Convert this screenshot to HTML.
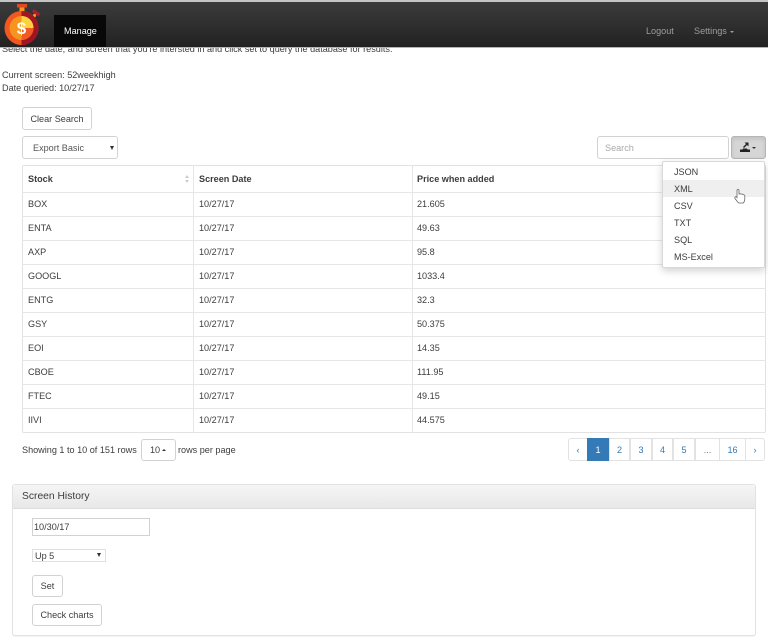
<!DOCTYPE html>
<html>
<head>
<meta charset="utf-8">
<style>
html,body{margin:0;padding:0;background:#fff;}
body{width:768px;height:644px;position:relative;overflow:hidden;font-family:"Liberation Sans",Arial,sans-serif;font-size:9.1px;color:#3c3c3c;}
#w{position:absolute;left:0;top:0;width:768px;height:644px;filter:blur(.35px);overflow:hidden;}
.a{position:absolute;white-space:nowrap;}
.t{line-height:14px;height:14px;}
.btn{position:absolute;box-sizing:border-box;border:1px solid #d2d2d2;border-radius:3px;background:#fff;text-align:center;color:#3c3c3c;}
.nav{position:absolute;left:0;top:0;width:768px;height:48px;box-sizing:border-box;border-top:2px solid #c4c4c4;border-bottom:1px solid #b5b5b5;background:linear-gradient(#3b3b3b,#222);}
.hl{position:absolute;left:22px;width:744px;height:1px;background:#e6e6e6;}
.vl{position:absolute;top:165px;width:1px;height:268px;background:#e6e6e6;}
.pg{position:absolute;top:438px;height:23px;box-sizing:border-box;border:1px solid #e2e2e2;margin-left:-1px;line-height:22px;text-align:center;color:#337ab7;background:#fff;}
</style>
</head>
<body>
<div id="w">
<div class="a t" style="left:2px;top:42px;">Select the date, and screen that you're intersted in and click set to query the database for results.</div>
<div class="nav"></div>
<div class="a" style="left:54px;top:15px;width:52px;height:32px;background:#080808;"></div>
<div class="a t" style="left:64px;top:24px;color:#fff;">Manage</div>
<div class="a t" style="left:646px;top:24px;color:#9d9d9d;">Logout</div>
<div class="a t" style="left:694px;top:24px;color:#9d9d9d;">Settings</div>
<div class="a" style="left:730px;top:31px;border-top:2.5px solid #9d9d9d;border-left:2.5px solid transparent;border-right:2.5px solid transparent;"></div>
<svg class="a" style="left:0;top:0;" width="44" height="48" viewBox="0 0 44 48">
<rect x="17" y="4" width="10" height="3.500" fill="#e2491f"/>
<rect x="19.500" y="7.500" width="5" height="4" fill="#f7941d"/>
<rect x="32" y="11" width="8" height="3.500" transform="rotate(35 36 13)" fill="#b01c30"/>
<circle cx="34.500" cy="15.500" r="1.600" fill="#f7941d"/>
<circle cx="21.500" cy="28" r="17" fill="#f0581f"/>
<path d="M21.500 11A17 17 0 0 1 21.500 45Z" fill="#a01424"/>
<circle cx="21.500" cy="28" r="12" fill="#f7941d"/>
<path d="M21.500 16A12 12 0 0 1 33.500 28H21.500Z" fill="#fdd23e"/>
<path d="M21.500 28H33.500A12 12 0 0 1 21.500 40Z" fill="#f15a24"/>
<text x="21.500" y="34" text-anchor="middle" font-family="Liberation Sans" font-weight="bold" font-size="17" fill="#fff">$</text>
</svg>
<div class="a t" style="left:2px;top:68px;">Current screen: 52weekhigh</div>
<div class="a t" style="left:2px;top:81px;">Date queried: 10/27/17</div>

<div class="btn" style="left:22px;top:107px;width:70px;height:23px;line-height:22px;">Clear Search</div>
<div class="btn" style="left:22px;top:136px;width:96px;height:23px;line-height:22px;text-align:left;padding-left:10px;color:#555;">Export Basic</div>
<div class="a" style="left:110px;top:146px;border-top:4px solid #333;border-left:2px solid transparent;border-right:2px solid transparent;"></div>

<div class="btn" style="left:597px;top:136px;width:132px;height:23px;line-height:22px;text-align:left;padding-left:7px;color:#aaa;">Search</div>
<div class="btn" style="left:731px;top:136px;width:35px;height:23px;background:#d6d6d6;border-color:#b5b5b5;box-shadow:inset 0 2px 4px rgba(0,0,0,.1);"></div>
<svg class="a" style="left:739px;top:141px;" width="13" height="12" viewBox="0 0 13 12"><path d="M1 11H11V8.500H8.500L8 7.500H4L3.500 8.500H1Z" fill="#222"/><path d="M4.500 6.500L8 3" stroke="#222" stroke-width="1.400" fill="none"/><path d="M5.500 1.500H9.500V5.500Z" fill="#222"/></svg>
<div class="a" style="left:752px;top:147px;border-top:2.5px solid #333;border-left:2.5px solid transparent;border-right:2.5px solid transparent;"></div>

<div class="a" style="left:22px;top:165px;width:744px;height:268px;box-sizing:border-box;border:1px solid #e2e2e2;border-radius:2px;"></div>
<div class="hl" style="top:192px;"></div><div class="hl" style="top:216px;"></div><div class="hl" style="top:240px;"></div><div class="hl" style="top:264px;"></div><div class="hl" style="top:288px;"></div><div class="hl" style="top:312px;"></div><div class="hl" style="top:336px;"></div><div class="hl" style="top:360px;"></div><div class="hl" style="top:384px;"></div><div class="hl" style="top:408px;"></div>
<div class="vl" style="left:193px;"></div><div class="vl" style="left:412px;"></div>
<div class="a t" style="left:28px;top:172px;font-weight:bold;">Stock</div>
<div class="a t" style="left:199px;top:172px;font-weight:bold;">Screen Date</div>
<div class="a t" style="left:417px;top:172px;font-weight:bold;">Price when added</div>
<div class="a" style="left:185px;top:175px;border-bottom:3.500px solid #ccc;border-left:2.500px solid transparent;border-right:2.500px solid transparent;"></div>
<div class="a" style="left:185px;top:180px;border-top:3.500px solid #ccc;border-left:2.500px solid transparent;border-right:2.500px solid transparent;"></div>

<div class="a t" style="left:28px;top:197px;">BOX</div><div class="a t" style="left:199px;top:197px;">10/27/17</div><div class="a t" style="left:417px;top:197px;">21.605</div>
<div class="a t" style="left:28px;top:221px;">ENTA</div><div class="a t" style="left:199px;top:221px;">10/27/17</div><div class="a t" style="left:417px;top:221px;">49.63</div>
<div class="a t" style="left:28px;top:245px;">AXP</div><div class="a t" style="left:199px;top:245px;">10/27/17</div><div class="a t" style="left:417px;top:245px;">95.8</div>
<div class="a t" style="left:28px;top:269px;">GOOGL</div><div class="a t" style="left:199px;top:269px;">10/27/17</div><div class="a t" style="left:417px;top:269px;">1033.4</div>
<div class="a t" style="left:28px;top:293px;">ENTG</div><div class="a t" style="left:199px;top:293px;">10/27/17</div><div class="a t" style="left:417px;top:293px;">32.3</div>
<div class="a t" style="left:28px;top:317px;">GSY</div><div class="a t" style="left:199px;top:317px;">10/27/17</div><div class="a t" style="left:417px;top:317px;">50.375</div>
<div class="a t" style="left:28px;top:341px;">EOI</div><div class="a t" style="left:199px;top:341px;">10/27/17</div><div class="a t" style="left:417px;top:341px;">14.35</div>
<div class="a t" style="left:28px;top:365px;">CBOE</div><div class="a t" style="left:199px;top:365px;">10/27/17</div><div class="a t" style="left:417px;top:365px;">111.95</div>
<div class="a t" style="left:28px;top:389px;">FTEC</div><div class="a t" style="left:199px;top:389px;">10/27/17</div><div class="a t" style="left:417px;top:389px;">49.15</div>
<div class="a t" style="left:28px;top:413px;">IIVI</div><div class="a t" style="left:199px;top:413px;">10/27/17</div><div class="a t" style="left:417px;top:413px;">44.575</div>

<div class="a" style="left:662px;top:161px;width:103px;height:107px;box-sizing:border-box;background:#fff;border:1px solid #d8d8d8;border-radius:2px;box-shadow:0 3px 8px rgba(0,0,0,.18);"></div>
<div class="a" style="left:663px;top:180px;width:101px;height:17px;background:#efefef;"></div>
<div class="a t" style="left:674px;top:165px;">JSON</div>
<div class="a t" style="left:674px;top:182px;">XML</div>
<div class="a t" style="left:674px;top:199px;">CSV</div>
<div class="a t" style="left:674px;top:216px;">TXT</div>
<div class="a t" style="left:674px;top:233px;">SQL</div>
<div class="a t" style="left:674px;top:250px;">MS-Excel</div>
<svg class="a" style="left:733px;top:188px;" width="13" height="16" viewBox="0 0 13 16"><path d="M4 8V2.500C4 1 6 1 6 2.500V6.500C6 5.500 8 5.500 8 6.500C8 5.800 10 5.800 10 7C10 6.500 11.800 6.500 11.800 8V11C11.800 13 11 14 10.500 15H5.500L2 10.500C1.200 9 3 8 4 9.500Z" fill="#fff" stroke="#666" stroke-width=".8"/></svg>

<div class="a t" style="left:22px;top:443px;">Showing 1 to 10 of 151 rows</div>
<div class="btn" style="left:141px;top:439px;width:35px;height:22px;line-height:21px;text-align:left;padding-left:8px;">10</div>
<div class="a" style="left:162px;top:449px;border-bottom:2.500px solid #333;border-left:2.500px solid transparent;border-right:2.500px solid transparent;"></div>
<div class="a t" style="left:178px;top:443px;">rows per page</div>

<div class="pg" style="left:569px;width:20px;border-radius:3px 0 0 3px;">‹</div>
<div class="pg" style="left:588px;width:22px;background:#337ab7;border-color:#337ab7;color:#fff;">1</div>
<div class="pg" style="left:610px;width:21px;">2</div>
<div class="pg" style="left:631px;width:22px;">3</div>
<div class="pg" style="left:653px;width:21px;">4</div>
<div class="pg" style="left:674px;width:22px;">5</div>
<div class="pg" style="left:696px;width:25px;color:#777;">...</div>
<div class="pg" style="left:720px;width:27px;">16</div>
<div class="pg" style="left:746px;width:20px;border-radius:0 3px 3px 0;">›</div>

<div class="a" style="left:12px;top:484px;width:744px;height:152px;box-sizing:border-box;border:1px solid #e2e2e2;border-radius:3px;box-shadow:0 1px 1px rgba(0,0,0,.05);"></div>
<div class="a" style="left:13px;top:485px;width:742px;height:23px;background:linear-gradient(#f5f5f5,#e8e8e8);border-bottom:1px solid #ddd;border-radius:3px 3px 0 0;"></div>
<div class="a" style="left:22px;top:489px;font-size:10.300px;line-height:15px;">Screen History</div>

<div class="a" style="left:32px;top:518px;width:118px;height:18px;box-sizing:border-box;border:1px solid #d2d2d2;line-height:17px;padding-left:1px;">10/30/17</div>
<div class="a" style="left:32px;top:549px;width:74px;height:13px;box-sizing:border-box;border:1px solid #e0e0e0;line-height:12px;padding-left:2px;">Up 5</div>
<div class="a" style="left:97px;top:553px;border-top:4px solid #333;border-left:2px solid transparent;border-right:2px solid transparent;"></div>
<div class="btn" style="left:32px;top:575px;width:31px;height:22px;line-height:21px;">Set</div>
<div class="btn" style="left:32px;top:604px;width:70px;height:22px;line-height:21px;">Check charts</div>
</div>
</body>
</html>
